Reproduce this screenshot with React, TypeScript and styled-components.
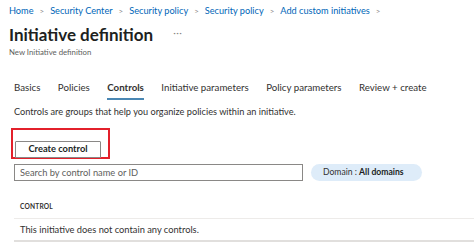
import React from 'react';
import styled, { createGlobalStyle } from 'styled-components';

const GlobalStyle = createGlobalStyle`
  html, body {
    margin: 0;
    padding: 0;
    background: #ffffff;
    font-family: Lato, "Noto Sans", sans-serif;
    color: #323130;
  }
`;

const Page = styled.div`
  width: 474px;
  height: 248px;
  overflow: hidden;
  padding: 4px 0 0 9px;
  box-sizing: border-box;
`;

const Breadcrumb = styled.nav`
  display: flex;
  align-items: center;
  gap: 6px;
  height: 13px;
  font-size: 9.2px;
  white-space: nowrap;
`;

const Crumb = styled.a`
  color: #0066b8;
  text-decoration: none;
`;

const Chevron = styled.span`
  color: #8a8886;
  font-size: 8px;
`;

const TitleRow = styled.div`
  display: flex;
  align-items: center;
  gap: 20px;
  margin-top: 5px;
  height: 24px;
`;

const Title = styled.h1`
  margin: 0;
  font-size: 17px;
  font-weight: 700;
  color: #201f1e;
  white-space: nowrap;
`;

const More = styled.span`
  color: #8a8886;
  font-size: 10px;
  letter-spacing: 0.5px;
  margin-top: -4px;
`;

const Subtitle = styled.div`
  font-size: 7.8px;
  color: #605e5c;
  margin-top: 1px;
`;

const Content = styled.div`
  padding-left: 5px;
`;

const Tabs = styled.div`
  display: flex;
  gap: 17.5px;
  margin-top: 22px;
  height: 22px;
`;

const Tab = styled.div<{ $active?: boolean }>`
  position: relative;
  flex-shrink: 0;
  white-space: nowrap;
  font-size: 9.7px;
  font-weight: ${(p) => (p.$active ? 700 : 400)};
  color: #323130;
  padding-top: 2px;

  &::after {
    content: '';
    display: ${(p) => (p.$active ? 'block' : 'none')};
    position: absolute;
    left: 0;
    right: 0;
    top: 19px;
    height: 2px;
    background: #4a87b3;
  }
`;

const Description = styled.p`
  margin: 5px 0 0;
  font-size: 9.2px;
  color: #323130;
  height: 16px;
  white-space: nowrap;
`;

const Highlight = styled.div`
  margin: 6px 0 0 -3px;
  width: 99px;
  height: 31px;
  box-sizing: border-box;
  border: 2px solid #e3202b;
  padding: 6px 0 0 2px;
`;

const Button = styled.button`
  width: 86px;
  height: 17px;
  box-sizing: border-box;
  border: 1px solid #8a8886;
  border-radius: 1px;
  background: #ffffff;
  font-family: inherit;
  font-size: 9.3px;
  font-weight: 700;
  color: #201f1e;
  padding: 0;
  line-height: 14px;
`;

const FilterRow = styled.div`
  display: flex;
  align-items: center;
  gap: 8px;
  margin-top: 5px;
`;

const Search = styled.div`
  width: 289px;
  height: 17px;
  box-sizing: border-box;
  border: 1px solid #8a8886;
  font-size: 9.3px;
  color: #605e5c;
  padding-left: 5px;
  line-height: 15px;
`;

const Pill = styled.div`
  height: 17px;
  width: 111px;
  box-sizing: border-box;
  border-radius: 9px;
  background: #deecf9;
  font-size: 8.6px;
  color: #323130;
  padding-left: 12px;
  line-height: 17px;
  white-space: nowrap;

  b {
    font-weight: 700;
    color: #201f1e;
  }
`;

const Table = styled.div`
  margin-top: 21px;
`;

const HeaderCell = styled.div`
  font-size: 6.6px;
  font-weight: 700;
  color: #323130;
  padding: 0 0 8px 6px;
  border-bottom: 1px solid #edebe9;
  letter-spacing: 0.2px;
`;

const RowCell = styled.div`
  font-size: 9.3px;
  color: #323130;
  padding: 5px 0 5px 6px;
  border-bottom: 2px solid #e1dfdd;
`;

const crumbs = ['Home', 'Security Center', 'Security policy', 'Security policy', 'Add custom initiatives'];
const tabs = ['Basics', 'Policies', 'Controls', 'Initiative parameters', 'Policy parameters', 'Review + create'];

export default function App() {
  return (
    <>
      <GlobalStyle />
      <Page>
        <Breadcrumb>
          {crumbs.map((c, i) => (
            <React.Fragment key={i}>
              <Crumb>{c}</Crumb>
              <Chevron>&gt;</Chevron>
            </React.Fragment>
          ))}
        </Breadcrumb>
        <TitleRow>
          <Title>Initiative definition</Title>
          <More>···</More>
        </TitleRow>
        <Subtitle>New Initiative definition</Subtitle>
        <Content>
          <Tabs>
            {tabs.map((t) => (
              <Tab key={t} $active={t === 'Controls'}>
                {t}
              </Tab>
            ))}
          </Tabs>
          <Description>Controls are groups that help you organize policies within an initiative.</Description>
          <Highlight>
            <Button>Create control</Button>
          </Highlight>
          <FilterRow>
            <Search>Search by control name or ID</Search>
            <Pill>
              Domain : <b>All domains</b>
            </Pill>
          </FilterRow>
          <Table>
            <HeaderCell>CONTROL</HeaderCell>
            <RowCell>This initiative does not contain any controls.</RowCell>
          </Table>
        </Content>
      </Page>
    </>
  );
}
